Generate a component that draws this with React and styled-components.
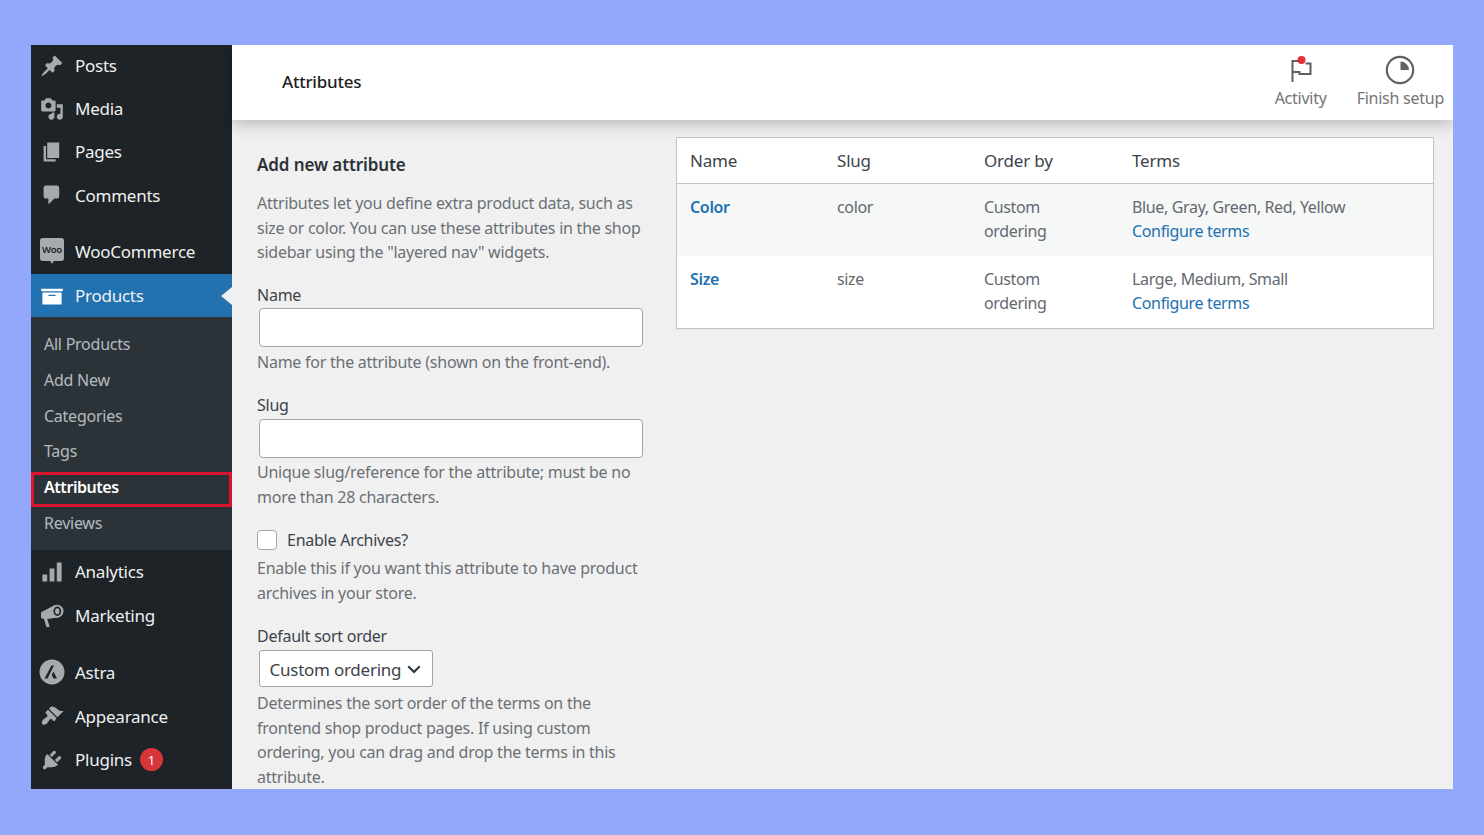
import React from "react";
import styled, { createGlobalStyle } from "styled-components";

const Global = createGlobalStyle`
  html, body { margin: 0; padding: 0; height: 100%; background: #94a8fb; }
  * { box-sizing: border-box; }
  body { font-family: "Noto Sans", "Open Sans", sans-serif; }
`;

const Page = styled.div`
  width: 1484px;
  height: 835px;
  padding: 45px 31px 46px 31px;
  background: #94a8fb;
  overflow: hidden;
`;
const Frame = styled.div`
  display: flex;
  width: 1422px;
  height: 744px;
  overflow: hidden;
  background: #f0f0f1;
`;
const Sidebar = styled.nav`
  flex: 0 0 201px;
  background: #1d2327;
  display: flex;
  flex-direction: column;
`;
const MenuRow = styled.div`
  height: ${(p) => p.$h || 43.2}px;
  padding-bottom: ${(p) => (p.$lift ? 2 : 0)}px;
  flex: none;
  display: flex;
  align-items: center;
  position: relative;
  color: #f0f0f1;
  font-size: 17px;
  letter-spacing: -0.25px;
  background: ${(p) => (p.$active ? "#2271b1" : "transparent")};
  &::after {
    content: "";
    display: ${(p) => (p.$active ? "block" : "none")};
    position: absolute;
    right: 0;
    top: 50%;
    margin-top: -9px;
    border: 9px solid transparent;
    border-right: 11px solid #f0f0f1;
    border-left: 0;
  }
`;
const IconSlot = styled.span`
  flex: 0 0 42px;
  margin-right: 2px;
  display: flex;
  justify-content: center;
  svg { display: block; }
`;
const Separator = styled.div`
  height: 13px;
  flex: none;
`;
const Submenu = styled.div`
  flex: none;
  height: 233px;
  padding: 9px 0;
  background: #2c3338;
  display: flex;
  flex-direction: column;
`;
const SubItem = styled.div`
  height: 35.8px;
  flex: none;
  display: flex;
  align-items: center;
  padding-left: 13px;
  font-size: 16px;
  letter-spacing: -0.25px;
  color: rgba(240, 246, 252, 0.7);
`;
const CurrentSubItem = styled(SubItem)`
  height: 35px;
  margin: 2.8px 0 -2px;
  padding: 0 0 5px 10px;
  color: #fff;
  font-weight: 600;
  letter-spacing: -0.45px;
  border: 3px solid #dc1430;
`;
const Badge = styled.span`
  width: 23px;
  height: 23px;
  margin-left: 8px;
  border-radius: 50%;
  background: #d63638;
  color: #fff;
  font-size: 13px;
  display: flex;
  align-items: center;
  justify-content: center;
`;
const Main = styled.div`
  flex: 1;
  min-width: 0;
  display: flex;
  flex-direction: column;
`;
const Header = styled.header`
  flex: 0 0 75px;
  background: #fff;
  box-shadow: 0 3px 16px rgba(0, 0, 0, 0.26);
  position: relative;
  z-index: 1;
  display: flex;
  align-items: center;
  justify-content: space-between;
  padding: 0 9px 2px 50px;
`;
const HeaderTitle = styled.h1`
  margin: 0;
  font-size: 17px;
  font-weight: 500;
  letter-spacing: -0.25px;
  color: #1e1e1e;
`;
const HeaderTools = styled.div`
  display: flex;
  gap: 30px;
  align-items: center;
`;
const Tool = styled.div`
  display: flex;
  flex-direction: column;
  align-items: center;
  gap: 2px;
  font-size: 16px;
  line-height: 22px;
  letter-spacing: -0.25px;
  color: #757575;
  svg { display: block; }
`;
const Content = styled.div`
  flex: 1;
  min-height: 0;
  display: flex;
  padding: 17px 19px 0 25px;
  gap: 32px;
`;
const FormCol = styled.div`
  flex: 0 0 387px;
  font-size: 16px;
  letter-spacing: -0.25px;
  color: #646970;
`;
const FormTitle = styled.h2`
  margin: 0 0 15.5px;
  padding-top: 15.5px;
  font-size: 17px;
  line-height: 23px;
  font-weight: 600;
  letter-spacing: -0.1px;
  color: #2c3338;
`;
const Help = styled.p`
  margin: 0;
  line-height: 24.5px;
  color: #6b7076;
`;
const FieldLabel = styled.label`
  display: block;
  line-height: 24px;
  color: #3c434a;
  margin-top: ${(p) => p.$top}px;
`;
const TextInput = styled.input`
  display: block;
  width: 384px;
  height: 39px;
  margin: 1.5px 0 2.5px 1.5px;
  background: #fff;
  border: 1px solid #a2a4a8;
  border-radius: 4px;
`;
const CheckRow = styled.div`
  display: flex;
  align-items: center;
  gap: 10px;
  margin: 18.5px 0 4.5px;
  height: 24px;
  color: #3c434a;
`;
const CheckBox = styled.span`
  width: 20px;
  height: 20px;
  background: #fff;
  border: 1px solid #a2a4a8;
  border-radius: 4px;
`;
const SelectBox = styled.div`
  width: 174.5px;
  height: 37px;
  margin: 2px 0 4px 1.5px;
  padding: 2px 11px 0 10px;
  display: flex;
  align-items: center;
  justify-content: space-between;
  background: #fff;
  border: 1px solid #a2a4a8;
  border-radius: 3px;
  font-size: 17px;
  color: #3c434a;
`;
const TableCard = styled.div`
  flex: 1;
  align-self: flex-start;
  background: #fff;
  border: 1px solid #c3c4c7;
  box-shadow: 0 1px 1px rgba(0, 0, 0, 0.04);
`;
const Table = styled.table`
  width: 100%;
  border-collapse: collapse;
  table-layout: fixed;
  font-size: 16px;
  letter-spacing: -0.35px;
`;
const Th = styled.th`
  width: ${(p) => p.$w || "auto"};
  height: 45px;
  padding: 0 0 0 13px;
  text-align: left;
  font-weight: 400;
  font-size: 17px;
  letter-spacing: -0.2px;
  color: #3c434a;
  border-bottom: 1px solid #c3c4c7;
`;
const Tr = styled.tr`
  background: ${(p) => (p.$alt ? "#f6f7f7" : "#fff")};
`;
const Td = styled.td`
  height: 72.5px;
  padding: 11px 0 0 13px;
  vertical-align: top;
  line-height: 24.5px;
  color: #646970;
`;
const NameLink = styled.a`
  color: #2271b1;
  font-weight: 600;
`;
const TermLink = styled.a`
  color: #2271b1;
`;

const P = ({ d, size = 24, color = "#a7aaad" }) => (
  <svg width={size} height={size} viewBox="0 0 20 20" fill={color}>
    <path d={d} />
  </svg>
);

const paths = {
  pin: "M10.44 3.02l1.82-1.82 6.36 6.35-1.83 1.82c-1.05-.68-2.48-.57-3.41.36l-.75.75c-.92.93-1.04 2.35-.35 3.41l-1.83 1.82-2.41-2.41-2.8 2.79c-.42.42-3.38 2.71-3.8 2.29s1.86-3.39 2.28-3.81l2.79-2.79L4.1 9.36l1.83-1.82c1.05.69 2.48.57 3.4-.36l.75-.75c.93-.92 1.05-2.35.36-3.41z",
  media: "M13 11V4c0-.55-.45-1-1-1h-1.67L9 1H5L3.67 3H2c-.55 0-1 .45-1 1v7c0 .55.45 1 1 1h10c.55 0 1-.45 1-1zM7 4.5c1.38 0 2.5 1.12 2.5 2.5S8.38 9.5 7 9.5 4.5 8.38 4.5 7 5.62 4.5 7 4.5zM14 6h5v10.5c0 1.38-1.12 2.5-2.5 2.5S14 17.88 14 16.5s1.12-2.5 2.5-2.5c.17 0 .34.02.5.05V9h-3V6zm-4 8.05V13h2v3.5c0 1.38-1.12 2.5-2.5 2.5S7 17.88 7 16.5 8.12 14 9.5 14c.17 0 .34.02.5.05z",
  page: "M6 15V2h10v13H6zm-1 1h8v2H3V5h2v11z",
  comment: "M5 2h9c1.1 0 2 .9 2 2v7c0 1.1-.9 2-2 2h-2l-5 5v-5H5c-1.1 0-2-.9-2-2V4c0-1.1.9-2 2-2z",
  archive: "M19 4v2H1V4h18zM2 7h16v10H2V7zm11 3V9H7v1h6z",
  chart: "M18 18V2h-4v16h4zm-6 0V7H8v11h4zm-6 0v-6H2v6h4z",
  brush: "M14.48 11.06L7.41 3.99l1.5-1.5c.5-.56 2.3-.47 3.51.32 1.21.8 1.43 1.28 2.91 2.1 1.18.64 2.45 1.26 4.45.85zm-.71.71L6.7 4.7 4.93 6.47c-.39.39-.39 1.02 0 1.41l1.06 1.06c.39.39.39 1.03 0 1.42-.6.6-1.43 1.11-2.21 1.69-.35.26-.7.53-1.01.84-1.34 1.34-1.58 3.1-.77 3.91.81.81 2.57.57 3.91-.77.31-.31.58-.66.84-1.01.58-.78 1.09-1.61 1.69-2.21.39-.39 1.03-.39 1.42 0l1.06 1.06c.39.39 1.02.39 1.41 0z",
  plug: "M13.11 4.36L9.87 7.6 8 5.73l3.24-3.24c.35-.34 1.05-.2 1.56.32.52.51.66 1.21.31 1.55zm-8 1.77l.91-1.12 9.01 9.01-1.19.84c-.71.71-2.63 1.16-3.82 1.16H6.14L4.9 17.26c-.59.59-1.54.59-2.12 0-.59-.58-.59-1.53 0-2.12l1.24-1.24v-3.88c0-1.13.4-3.19 1.09-3.89zm7.26 3.97l3.24-3.24c.34-.35 1.04-.21 1.55.31.52.51.66 1.21.31 1.55l-3.24 3.25z",
};

const MegaIcon = () => (
  <svg width="24" height="24" viewBox="0 0 24 24" fill="#a7aaad">
    <path d="M1.500 8L15 1l3 12.500L7.300 15l2.200 7.200c.2.500-.1.800-.6.800H7c-.4 0-.7-.2-.8-.6L4 15l-2-.5C1.300 14.300 1 13.800 1 13.200V9c0-.4.200-.8.500-1z" />
    <circle cx="17" cy="7.200" r="6.500" />
    <ellipse cx="17.300" cy="7.200" rx="3.900" ry="4.700" fill="#1d2327" />
    <ellipse cx="17.300" cy="7.200" rx="2.200" ry="3" />
  </svg>
);
const WooIcon = () => (
  <svg width="26" height="26" viewBox="0 0 26 26">
    <path d="M3.500 0h19C24 0 25 1 25 2.500v18c0 1.500-1 2.500-2.500 2.500h-7.800L13 26l-1.700-3H3.500C2 23 1 22 1 20.500v-18C1 1 2 0 3.500 0z" fill="#a7aaad" />
    <text x="13" y="15" textAnchor="middle" fontSize="9.500" fontFamily="Noto Sans, sans-serif" fontWeight="600" fill="#1d2327">Woo</text>
  </svg>
);
const AstraIcon = () => (
  <svg width="26" height="26" viewBox="0 0 26 26">
    <circle cx="13" cy="13" r="12.500" fill="#a7aaad" />
    <path d="M12.500 6.500H15L8.500 19.500h-3zM14.500 12.500l3.500 7h-3.500l-1.700-3.800z" fill="#1d2327" />
  </svg>
);
const FlagIcon = () => (
  <svg width="30" height="30" viewBox="0 0 30 30" fill="none">
    <path d="M6.500 27V6h7M6.500 17h7v2h11V8.500h-5" stroke="#5a6066" strokeWidth="2" />
    <circle cx="15.500" cy="5" r="4" fill="#e0313a" />
  </svg>
);
const PieIcon = () => (
  <svg width="30" height="30" viewBox="0 0 30 30" fill="none">
    <circle cx="15" cy="15" r="13.200" stroke="#5f6368" strokeWidth="2.200" />
    <path d="M15.500 6.500a8.500 8.500 0 0 1 8.500 8.500h-8.500z" fill="#5f6368" />
  </svg>
);
const Chevron = () => (
  <svg width="14" height="9" viewBox="0 0 14 9" fill="none">
    <path d="M1.300 1.300L7 7l5.700-5.700" stroke="#2c3338" strokeWidth="2" />
  </svg>
);

const Menu = ({ icon, label, active, lift, h, children }) => (
  <MenuRow $active={active} $lift={lift} $h={h}>
    <IconSlot>{icon}</IconSlot>
    {label}
    {children}
  </MenuRow>
);

const subItems = ["All Products", "Add New", "Categories", "Tags", "Attributes", "Reviews"];

export default function App() {
  return (
    <Page>
      <Global />
      <Frame>
        <Sidebar>
          <Menu lift icon={<P d={paths.pin} />} label="Posts" />
          <Menu lift icon={<P d={paths.media} />} label="Media" />
          <Menu lift icon={<P d={paths.page} />} label="Pages" />
          <Menu lift icon={<P d={paths.comment} />} label="Comments" />
          <Separator />
          <Menu lift icon={<WooIcon />} label="WooCommerce" />
          <Menu icon={<P d={paths.archive} color="#fff" />} label="Products" active />
          <Submenu>
            {subItems.map((s) =>
              s === "Attributes" ? (
                <CurrentSubItem key={s}>{s}</CurrentSubItem>
              ) : (
                <SubItem key={s}>{s}</SubItem>
              )
            )}
          </Submenu>
          <Menu h={43.7} icon={<P d={paths.chart} />} label="Analytics" />
          <Menu h={43.7} icon={<MegaIcon />} label="Marketing" />
          <Separator />
          <Menu h={43.7} icon={<AstraIcon />} label="Astra" />
          <Menu h={43.7} icon={<P d={paths.brush} />} label="Appearance" />
          <Menu h={43.7} icon={<P d={paths.plug} />} label="Plugins">
            <Badge>1</Badge>
          </Menu>
        </Sidebar>
        <Main>
          <Header>
            <HeaderTitle>Attributes</HeaderTitle>
            <HeaderTools>
              <Tool><FlagIcon />Activity</Tool>
              <Tool><PieIcon />Finish setup</Tool>
            </HeaderTools>
          </Header>
          <Content>
            <FormCol>
              <FormTitle>Add new attribute</FormTitle>
              <Help>Attributes let you define extra product data, such as size or color. You can use these attributes in the shop sidebar using the "layered nav" widgets.</Help>
              <FieldLabel $top={18}>Name</FieldLabel>
              <TextInput />
              <Help>Name for the attribute (shown on the front-end).</Help>
              <FieldLabel $top={19}>Slug</FieldLabel>
              <TextInput />
              <Help>Unique slug/reference for the attribute; must be no more than 28 characters.</Help>
              <CheckRow><CheckBox />Enable Archives?</CheckRow>
              <Help>Enable this if you want this attribute to have product archives in your store.</Help>
              <FieldLabel $top={19}>Default sort order</FieldLabel>
              <SelectBox>Custom ordering<Chevron /></SelectBox>
              <Help>Determines the sort order of the terms on the frontend shop product pages. If using custom ordering, you can drag and drop the terms in this attribute.</Help>
            </FormCol>
            <TableCard>
              <Table>
                <thead>
                  <tr>
                    <Th $w="147px">Name</Th>
                    <Th $w="147px">Slug</Th>
                    <Th $w="148px">Order by</Th>
                    <Th>Terms</Th>
                  </tr>
                </thead>
                <tbody>
                  <Tr $alt>
                    <Td><NameLink>Color</NameLink></Td>
                    <Td>color</Td>
                    <Td>Custom<br />ordering</Td>
                    <Td>Blue, Gray, Green, Red, Yellow<br /><TermLink>Configure terms</TermLink></Td>
                  </Tr>
                  <Tr>
                    <Td><NameLink>Size</NameLink></Td>
                    <Td>size</Td>
                    <Td>Custom<br />ordering</Td>
                    <Td>Large, Medium, Small<br /><TermLink>Configure terms</TermLink></Td>
                  </Tr>
                </tbody>
              </Table>
            </TableCard>
          </Content>
        </Main>
      </Frame>
    </Page>
  );
}
